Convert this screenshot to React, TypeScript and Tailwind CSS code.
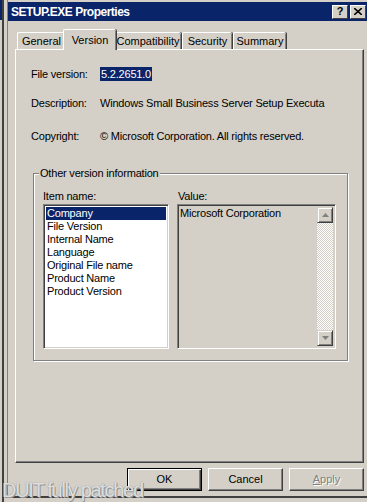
import React from "react";

const font = { fontFamily: '"Liberation Sans", Arial, sans-serif' };

function Tab({ label, selected, w }: { label: string; selected?: boolean; w: string }) {
  if (selected) {
    return (
      <div
        className={`relative z-10 -mb-[1px] -mx-[2px] h-[21px] ${w} border-l border-t border-white border-r-0 rounded-t-[2px] bg-[#d4d0c8] shadow-[1px_0_0_#404040,inset_-1px_0_0_#808080] flex items-start justify-center pt-[2px] text-[11px] text-black`}
      >
        {label}
      </div>
    );
  }
  return (
    <div
      className={`h-[17px] ${w} border-l border-t border-white rounded-t-[2px] bg-[#d4d0c8] shadow-[1px_0_0_#404040,inset_-1px_0_0_#808080] flex items-center justify-center pt-[1px] text-[11px] text-black`}
    >
      {label}
    </div>
  );
}

function Btn({ label, def, disabled }: { label: React.ReactNode; def?: boolean; disabled?: boolean }) {
  return (
    <div
      className={`w-[75px] h-[23px] flex items-center justify-center text-[11px] bg-[#d4d0c8] ${
        def
          ? "border border-black shadow-[inset_1px_1px_0_#fff,inset_-1px_-1px_0_#404040,inset_-2px_-2px_0_#808080]"
          : "border-t border-l border-white border-r border-b border-r-[#404040] border-b-[#404040] shadow-[inset_-1px_-1px_0_#808080]"
      } ${disabled ? "text-[#808080] [text-shadow:1px_1px_0_#fff]" : "text-black"}`}
    >
      {label}
    </div>
  );
}

function ScrollBtn({ up }: { up?: boolean }) {
  return (
    <div className="w-[16px] h-[16px] bg-[#d4d0c8] border-t border-l border-[#d4d0c8] border-r border-b border-r-[#404040] border-b-[#404040] shadow-[inset_1px_1px_0_#fff,inset_-1px_-1px_0_#808080] flex items-center justify-center">
      <svg width="7" height="4" viewBox="0 0 7 4">
        {up ? <polygon points="3.5,0 7,4 0,4" fill="#808080" /> : <polygon points="0,0 7,0 3.5,4" fill="#808080" />}
      </svg>
    </div>
  );
}

export default function App() {
  const items = ["Company", "File Version", "Internal Name", "Language", "Original File name", "Product Name", "Product Version"];
  return (
    <div className="relative w-[367px] h-[502px] overflow-hidden bg-[#d4d0c8] flex" style={font}>
      {/* left strip (window behind) */}
      <div className="w-[7px] h-full flex">
        <div className="w-[2px] h-full flex flex-col">
          <div className="h-[20px] bg-[#0a246a]" />
          <div className="flex-1 bg-[#d4d0c8]" />
        </div>
        <div className="w-[2px] h-full bg-[#404040]" />
        <div className="w-[3px] h-full bg-[#d4d0c8]" />
      </div>

      {/* dialog window */}
      <div className="flex-1 h-[498px] flex flex-col border-l border-[#808080] border-b-2 border-b-[#404040]">
        <div className="h-[2px]" />
        <div className="h-[19px] bg-[#0a246a] flex items-center pl-[3px] pr-[1px]">
          <span className="text-white font-bold text-[12px] tracking-[-0.5px]">SETUP.EXE Properties</span>
          <div className="flex-1" />
          <div className="w-[16px] h-[14px] bg-[#d4d0c8] border-t border-l border-white border-r border-b border-r-[#404040] border-b-[#404040] flex items-center justify-center text-[11px] font-bold text-black leading-none">
            ?
          </div>
          <div className="w-[2px]" />
          <div className="w-[16px] h-[14px] bg-[#d4d0c8] border-t border-l border-white border-r border-b border-r-[#404040] border-b-[#404040] flex items-center justify-center">
            <svg width="8" height="7" viewBox="0 0 8 7">
              <path d="M0 0 L8 7 M8 0 L0 7" stroke="#000" strokeWidth="1.6" />
            </svg>
          </div>
        </div>

        {/* tabs */}
        <div className="pl-[9px] pt-[7px] flex items-end h-[28px]">
          <Tab label="General" w="w-[48px]" />
          <Tab label="Version" w="w-[53px]" selected />
          <Tab label="Compatibility" w="w-[67px]" />
          <div className="w-[1px]" />
          <Tab label="Security" w="w-[50px]" />
          <div className="w-[1px]" />
          <Tab label="Summary" w="w-[53px]" />
        </div>

        {/* tab panel */}
        <div className="ml-[7px] w-[349px] h-[414px] border-l border-t border-white border-r border-b border-r-[#404040] border-b-[#404040] shadow-[inset_-1px_-1px_0_#808080] flex flex-col text-[11px] text-black tracking-[-0.2px]">
          <div className="pl-[15px] pt-[18px] flex items-center h-[13px] mt-[6px]">
            <span className="w-[69px]">File version:</span>
            <span className="bg-[#0a246a] text-white px-[1px] leading-[14px]">5.2.2651.0</span>
          </div>
          <div className="pl-[15px] pt-[21px] flex items-center">
            <span className="w-[69px]">Description:</span>
            <span>Windows Small Business Server Setup Executa</span>
          </div>
          <div className="pl-[15px] pt-[16px] flex items-center">
            <span className="w-[69px]">Copyright:</span>
            <span>© Microsoft Corporation. All rights reserved.</span>
          </div>

          {/* group box */}
          <div className="relative ml-[17px] mt-[29px] w-[315px] h-[188px] border border-[#808080] shadow-[1px_1px_0_#fff,inset_1px_1px_0_#fff]">
            <span className="absolute -top-[8px] left-[5px] px-[1px] bg-[#d4d0c8] leading-[14px]">Other version information</span>
            <div className="flex pt-[15px] pl-[9px]">
              <div className="flex flex-col w-[134px]">
                <span className="leading-[14px] mb-[1px]">Item name:</span>
                <div className="w-[126px] h-[145px] bg-white border-t border-l border-[#808080] border-r border-b border-r-white border-b-white shadow-[inset_1px_1px_0_#404040,inset_-1px_-1px_0_#d4d0c8] pt-[2px] px-[2px]">
                  {items.map((it, i) => (
                    <div
                      key={it}
                      className={`h-[13px] leading-[13px] pl-[1px] ${i === 0 ? "bg-[#0a246a] text-white" : ""}`}
                    >
                      {it}
                    </div>
                  ))}
                </div>
              </div>
              <div className="flex flex-col">
                <span className="leading-[14px] mb-[1px] pl-[1px]">Value:</span>
                <div className="w-[159px] h-[145px] bg-[#d4d0c8] border-t border-l border-[#808080] border-r border-b border-r-white border-b-white shadow-[inset_1px_1px_0_#404040,inset_-1px_-1px_0_#d4d0c8] flex p-[1px]">
                  <div className="flex-1 pl-[1px] pt-[1px] leading-[13px]">Microsoft Corporation</div>
                  <div className="w-[16px] flex flex-col mr-[1px] mt-[1px] mb-[1px]">
                    <ScrollBtn up />
                    <div className="flex-1 bg-[repeating-conic-gradient(#fff_0%_25%,#d4d0c8_0%_50%)] bg-[length:2px_2px]" />
                    <ScrollBtn />
                  </div>
                </div>
              </div>
            </div>
          </div>
        </div>

        {/* buttons */}
        <div className="flex justify-end gap-[6px] pr-[3px] pt-[5px]">
          <Btn label="OK" def />
          <Btn label="Cancel" />
          <Btn label={<span><u>A</u>pply</span>} disabled />
        </div>
      </div>

      {/* watermark */}
      <div
        className="absolute left-[2px] top-[479px] text-[20px] leading-[22px] text-[#ececec]/90 tracking-[-1.3px] [text-shadow:0_0_1px_#777,1px_1px_0_#9a9a9a]"
        style={{ fontFamily: '"Liberation Sans", Arial, sans-serif' }}
      >
        DUIT fully patched
      </div>
    </div>
  );
}
